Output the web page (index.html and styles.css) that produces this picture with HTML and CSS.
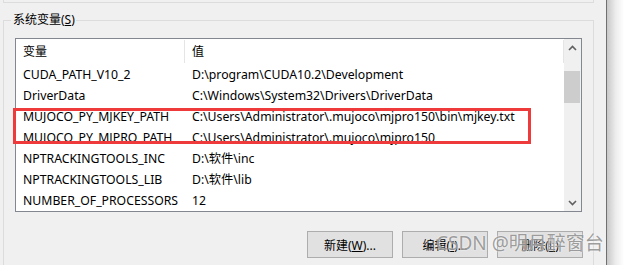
FILE: index.html
```html
<!DOCTYPE html>
<html lang="zh-CN">
<head>
  <meta charset="UTF-8" />
  <title>环境变量</title>
  <link rel="stylesheet" href="styles.css">
</head>
<body>

<div class="screen">
  <div class="window">
    <div class="user-group"></div>

    <fieldset class="group">
      <legend>系统变量(<u>S</u>)</legend>

      <div class="listview">
        <div class="list-body">
          <div class="list-head"><span>变量</span><span>值</span></div>
          <div class="row"><span>CUDA_PATH_V10_2</span><span>D:\program\CUDA10.2\Development</span></div>
          <div class="row"><span>DriverData</span><span>C:\Windows\System32\Drivers\DriverData</span></div>
          <div class="row"><span>MUJOCO_PY_MJKEY_PATH</span><span>C:\Users\Administrator\.mujoco\mjpro150\bin\mjkey.txt</span></div>
          <div class="row"><span>MUJOCO_PY_MJPRO_PATH</span><span>C:\Users\Administrator\.mujoco\mjpro150</span></div>
          <div class="row"><span>NPTRACKINGTOOLS_INC</span><span>D:\软件\inc</span></div>
          <div class="row"><span>NPTRACKINGTOOLS_LIB</span><span>D:\软件\lib</span></div>
          <div class="row"><span>NUMBER_OF_PROCESSORS</span><span>12</span></div>
        </div>
        <div class="scrollbar">
          <div class="arrow">
            <svg width="9" height="6" viewBox="0 0 9 6"><polyline points="1,5 4.5,1.5 8,5" fill="none" stroke="#606060" stroke-width="1.6"/></svg>
          </div>
          <div class="track"><div class="thumb"></div></div>
          <div class="arrow">
            <svg width="9" height="6" viewBox="0 0 9 6"><polyline points="1,1 4.5,4.5 8,1" fill="none" stroke="#606060" stroke-width="1.6"/></svg>
          </div>
        </div>
      </div>

      <div class="buttons">
        <button>新建(<u>W</u>)...</button>
        <button>编辑(<u>I</u>)...</button>
        <button>删除(<u>L</u>)</button>
      </div>
    </fieldset>

    <div class="mark"></div>
  </div>
  <div class="shadow"></div>

  <div class="watermark">CSDN @明月醉窗台</div>
</div>

</body>
</html>
```

FILE: styles.css
```css
body {
  margin: 0;
  background-color: #fff;
  font-family: "Noto Sans", "Noto Sans CJK SC", sans-serif;
  font-size: 12px;
  color: #000;
}

.screen {
  position: relative;
  display: flex;
  width: 624px;
  height: 265px;
  overflow: hidden;
}

.window {
  position: relative;
  width: 606px;
  flex-shrink: 0;
  background-color: #f0f0f0;
  border-right: 1px solid #707070;
}

.shadow {
  flex: 1;
  background: linear-gradient(to right, #c8c8c8, #ececec 50%, #fff);
}

.user-group {
  height: 2px;
  margin: 0 12px 0 3px;
  border: 1px solid #dcdcdc;
  border-top: none;
}

.group {
  margin: 9px 12px 0 3px;
  padding: 10px 10px 14px 7px;
  border: 1px solid #dcdcdc;
  border-bottom: none;
  min-width: 0;
}

.group legend {
  padding: 0 1px 0 2px;
  line-height: 16px;
}

.listview {
  display: flex;
  height: 172px;
  margin: 0 1px 0 4px;
  background-color: #fff;
  border: 1px solid #828790;
}

.list-body {
  flex: 1;
  overflow: hidden;
  font-size: 12.25px;
}

.list-head,
.row {
  display: grid;
  grid-template-columns: 169px 1fr;
  white-space: nowrap;
}

.list-head {
  height: 25px;
  font-size: 12px;
}

.list-head span {
  padding-left: 7px;
  line-height: 23px;
  margin: 1px 0;
  border-right: 1px solid #e5e5e5;
}

.row {
  height: 21px;
  line-height: 21px;
}

.row span {
  padding-left: 7px;
}

.scrollbar {
  width: 17px;
  display: flex;
  flex-direction: column;
  background-color: #f0f0f0;
}

.arrow {
  height: 17px;
  display: flex;
  align-items: center;
  justify-content: center;
}

.track {
  flex: 1;
}

.thumb {
  height: 32px;
  margin: 15px 1px 0 0;
  background-color: #cdcdcd;
}

.buttons {
  display: flex;
  justify-content: flex-end;
  gap: 9px;
  margin-top: 19px;
}

.buttons button {
  width: 86px;
  height: 27px;
  padding: 0;
  font-family: inherit;
  font-size: 12px;
  color: #000;
  background-color: #e1e1e1;
  border: 1px solid #adadad;
}

.mark {
  position: absolute;
  left: 13px;
  top: 108px;
  width: 512px;
  height: 30px;
  border: 3px solid #ee3a3a;
}

.watermark {
  position: absolute;
  left: 436px;
  top: 230px;
  font-size: 19px;
  line-height: 26px;
  color: rgba(140, 140, 140, 0.85);
  text-shadow: 0 0 2px #fff;
  white-space: nowrap;
}
```
